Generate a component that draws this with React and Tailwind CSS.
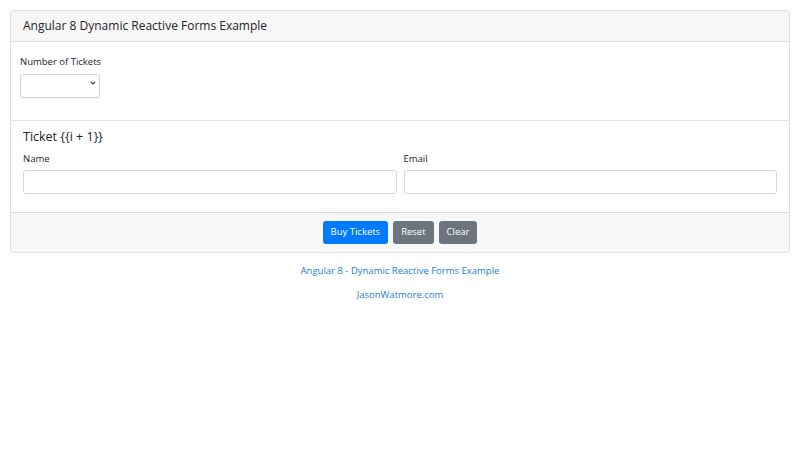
export default function App() {
  return (
    <div className="w-[800px] h-[450px] bg-white pt-[10px] px-[10px] text-[#212529]" style={{ fontFamily: '"Open Sans", "Noto Sans", sans-serif' }}>
      <div className="border border-[#dfdfdf] rounded-[3px] overflow-hidden">
        <div className="h-[31px] bg-[#f7f7f7] border-b border-[#dfdfdf] flex items-center px-[12px]">
          <h3 className="text-[12px] text-[#212529]">Angular 8 Dynamic Reactive Forms Example</h3>
        </div>
        <div className="px-[9px] pt-[13px] h-[78px]">
          <label className="block text-[9.5px] mb-[2px]">Number of Tickets</label>
          <div className="relative w-[80px] h-[24px]">
            <select className="appearance-none w-full h-full border border-[#d6d6d6] rounded-[3px] bg-white text-[10px] px-1 shadow-[0_1px_1px_rgba(0,0,0,0.06)]">
              <option value=""></option>
            </select>
            {/* chevron */}
            <svg className="absolute right-[4px] top-[10px] pointer-events-none" width="6" height="4" viewBox="0 0 6 4">
              <path d="M0.8 0.8 L3 3 L5.2 0.8" fill="none" stroke="#444" strokeWidth="1.1" />
            </svg>
          </div>
        </div>
        <div className="border-t border-[#e4e4e4] border-b border-b-[#d8d8d8] px-[12px] pt-[7px] pb-[18px]">
          <h5 className="text-[12.5px] mb-[5px]">Ticket {'{{i + 1}}'}</h5>
          <div className="flex gap-[7px]">
            <div className="flex-1">
              <label className="block text-[9.5px] mb-[4px]">Name</label>
              <input type="text" className="w-full h-[24px] border border-[#d6d6d6] rounded-[3px]" />
            </div>
            <div className="flex-1">
              <label className="block text-[9.5px] mb-[4px]">Email</label>
              <input type="text" className="w-full h-[24px] border border-[#d6d6d6] rounded-[3px]" />
            </div>
          </div>
        </div>
        <div className="h-[39px] bg-[#f7f7f7] flex items-center justify-center gap-[5px]">
          <button className="h-[23px] px-[8px] rounded-[3px] bg-[#007bff] text-white text-[9.5px]">Buy Tickets</button>
          <button className="h-[23px] px-[8px] rounded-[3px] bg-[#6c757d] text-white text-[9.5px]">Reset</button>
          <button className="h-[23px] px-[8px] rounded-[3px] bg-[#6c757d] text-white text-[9.5px]">Clear</button>
        </div>
      </div>
      <div className="text-center text-[9.5px] text-[#1a7fd6] mt-[11px]">
        <p className="mb-[10px]"><a href="#">Angular 8 - Dynamic Reactive Forms Example</a></p>
        <p><a href="#">JasonWatmore.com</a></p>
      </div>
    </div>
  )
}
